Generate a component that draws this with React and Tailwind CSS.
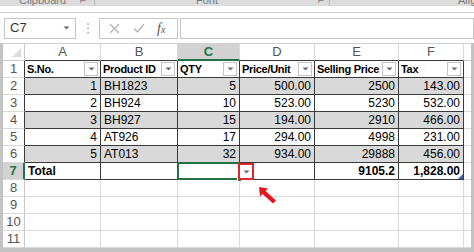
import React from 'react';

const colW = ['w-[76px]', 'w-[77px]', 'w-[62px]', 'w-[75px]', 'w-[84px]', 'w-[65px]'];
const letters = ['A', 'B', 'C', 'D', 'E', 'F'];
const heads = ['S.No.', 'Product ID', 'QTY', 'Price/Unit', 'Selling Price', 'Tax'];
const data = [
  [1, 'BH1823', 5, '500.00', 2500, '143.00'],
  [2, 'BH924', 10, '523.00', 5230, '532.00'],
  [3, 'BH927', 15, '194.00', 2910, '466.00'],
  [4, 'AT926', 17, '294.00', 4998, '231.00'],
  [5, 'AT013', 32, '934.00', 29888, '456.00'],
];

const Arrow = () => (
  <svg width="7" height="4" viewBox="0 0 7 4">
    <path d="M0.5 0.5 L6.5 0.5 L3.5 3.5 Z" fill="#6b6b6b" />
  </svg>
);

const FilterBtn = () => (
  <div className="absolute right-[2px] top-[1px] w-[14px] h-[14px] border border-[#c4c4c4] bg-white flex items-center justify-center">
    <Arrow />
  </div>
);

const RowHead = ({ n, table, active }) => (
  <div
    className={
      'w-[22px] h-full shrink-0 flex items-center justify-center text-[13px] border-b border-[#dadada] ' +
      (active
        ? 'bg-[#d2d2d2] text-[#217346] font-bold border-r-2 border-r-[#217346]'
        : table
        ? 'bg-white text-[#555] border-r border-r-[#3a3a3a]'
        : 'bg-white text-[#555] border-r border-r-[#c8c8c8]')
    }
  >
    {n}
  </div>
);

const Filler = () => <div className="flex-1 h-full border-b border-[#dadada]" />;

export default function App() {
  return (
    <div
      className="w-[474px] h-[252px] bg-[#c3c3c3] px-[3px] pb-[4px] flex flex-col overflow-hidden"
      style={{ fontFamily: '"Liberation Sans", Arial, sans-serif' }}
    >
      {/* ribbon bottom */}
      <div className="h-[6px] -mx-[3px] bg-[#dcdcdc] relative overflow-hidden text-[11px] text-[#7a7a7a] leading-none">
        <span className="absolute left-[19px] -top-[5px]">Clipboard</span>
        <span className="absolute left-[80px] -top-[5px]">⌐</span>
        <span className="absolute left-[94px] top-0 w-px h-full bg-[#b8b8b8]" />
        <span className="absolute left-[196px] -top-[5px]">Font</span>
        <span className="absolute left-[318px] -top-[5px]">⌐</span>
        <span className="absolute left-[329px] top-0 w-px h-full bg-[#b8b8b8]" />
        <span className="absolute left-[458px] -top-[5px]">Alig</span>
      </div>
      <div className="h-[7px] -mx-[3px] bg-white border-b border-[#d0d0d0]" />

      {/* formula bar */}
      <div className="h-[30px] -mx-[3px] pl-[4px] bg-white flex items-center">
        <div className="w-[72px] h-[21px] border border-[#c6c6c6] flex items-center justify-between pl-[5px] pr-[5px] text-[13px] text-[#333]">
          <span>C7</span>
          <Arrow />
        </div>
        <div className="w-[23px] flex justify-center text-[#b0b0b0] text-[12px]">⋮</div>
        <div className="w-[79px] h-[21px] border border-[#c6c6c6] flex items-center">
          <svg width="11" height="11" viewBox="0 0 11 11" className="ml-[9px]">
            <path d="M1 1 L10 10 M10 1 L1 10" stroke="#b3b3b3" strokeWidth="1.2" />
          </svg>
          <svg width="12" height="10" viewBox="0 0 12 10" className="ml-[13px]">
            <path d="M1 5.5 L4.5 9 L11 1" stroke="#b3b3b3" strokeWidth="1.3" fill="none" />
          </svg>
          <span className="ml-[12px] text-[14px] italic text-[#555]" style={{ fontFamily: '"Liberation Serif", serif' }}>
            f<span className="text-[10px]">x</span>
          </span>
        </div>
        <div className="flex-1 h-[21px] ml-[2px] border border-[#c6c6c6]" />
      </div>

      {/* sheet */}
      <div className="flex-1 bg-white relative overflow-hidden text-[12px] text-black">
        {/* column headers */}
        <div className="h-[18px] flex border-t border-[#d0d0d0]">
          <div className="w-[22px] h-full border-r border-b border-[#c8c8c8] relative">
            <svg width="9" height="9" viewBox="0 0 9 9" className="absolute right-[3px] bottom-[3px]">
              <path d="M9 0 L9 9 L0 9 Z" fill="#dcdcdc" />
            </svg>
          </div>
          {letters.map((l, i) => (
            <div
              key={l}
              className={
                colW[i] +
                ' h-full shrink-0 flex items-center justify-center text-[13px] border-r border-[#dadada] ' +
                (i === 2
                  ? 'bg-[#d2d2d2] text-[#217346] font-bold border-b-2 border-b-[#217346]'
                  : 'text-[#555] border-b border-b-[#3a3a3a]')
              }
            >
              {l}
            </div>
          ))}
          <div className="flex-1 h-full border-b border-[#c8c8c8]" />
        </div>

        {/* row 1 table header */}
        <div className="h-[17px] flex">
          <RowHead n={1} table />
          {heads.map((h, i) => (
            <div
              key={h}
              className={colW[i] + ' h-full shrink-0 relative font-bold text-[11px] tracking-[-0.3px] pl-[2px] leading-[16px] border-r border-b border-[#3a3a3a] whitespace-nowrap'}
            >
              {h}
              <FilterBtn />
            </div>
          ))}
          <Filler />
        </div>

        {/* data rows */}
        {data.map((r, ri) => (
          <div key={ri} className="h-[17px] flex">
            <RowHead n={ri + 2} table />
            {r.map((v, i) => (
              <div
                key={i}
                className={
                  colW[i] +
                  ' h-full shrink-0 leading-[16px] px-[3px] border-r border-b border-[#3a3a3a] ' +
                  (ri % 2 === 0 ? 'bg-[#d9d9d9] ' : 'bg-white ') +
                  (i === 1 ? 'text-left' : 'text-right')
                }
              >
                {v}
              </div>
            ))}
            <Filler />
          </div>
        ))}

        {/* total row */}
        <div className="h-[17px] flex">
          <RowHead n={7} active />
          <div className={colW[0] + ' h-full shrink-0 font-bold leading-[16px] pl-[3px] border-r border-b border-[#3a3a3a]'}>Total</div>
          <div className={colW[1] + ' h-full shrink-0 border-r border-b border-[#3a3a3a]'} />
          <div className={colW[2] + ' h-full shrink-0 relative border-r border-b border-[#3a3a3a]'}>
            <div className="absolute -left-px -top-px -right-px -bottom-px border-2 border-[#217346]" />
            <div className="absolute -right-[3px] -bottom-[3px] w-[5px] h-[5px] bg-[#217346] border border-white z-10" />
            <div className="absolute -right-[15px] top-0 w-[16px] h-[17px] border-2 border-[#e0262b] bg-white flex items-center justify-center z-20">
              <Arrow />
            </div>
          </div>
          <div className={colW[3] + ' h-full shrink-0 border-r border-b border-[#3a3a3a]'} />
          <div className={colW[4] + ' h-full shrink-0 font-bold text-right leading-[16px] px-[3px] border-r border-b border-[#3a3a3a]'}>9105.2</div>
          <div className={colW[5] + ' h-full shrink-0 relative font-bold text-right leading-[16px] px-[3px] border-r border-b border-[#3a3a3a]'}>
            1,828.00
            <svg width="5" height="5" viewBox="0 0 5 5" className="absolute right-0 bottom-0">
              <path d="M5 0 L5 5 L0 5 Z" fill="#3f5fa8" />
            </svg>
          </div>
          <Filler />
        </div>

        {/* empty rows */}
        {[8, 9, 10, 11].map((n) => (
          <div key={n} className="h-[17px] flex">
            <RowHead n={n} />
            {colW.map((w, i) => (
              <div key={i} className={w + ' h-full shrink-0 border-r border-b border-[#dadada]'} />
            ))}
            <Filler />
          </div>
        ))}

        {/* annotation arrow */}
        <svg width="22" height="20" viewBox="0 0 22 20" className="absolute left-[254px] top-[142px]">
          <path d="M2 2 L11 3.5 L8.5 6 L19 15.5 L16 18.5 L5.5 9 L3 11.5 Z" fill="#e8141c" />
        </svg>
      </div>
    </div>
  );
}
